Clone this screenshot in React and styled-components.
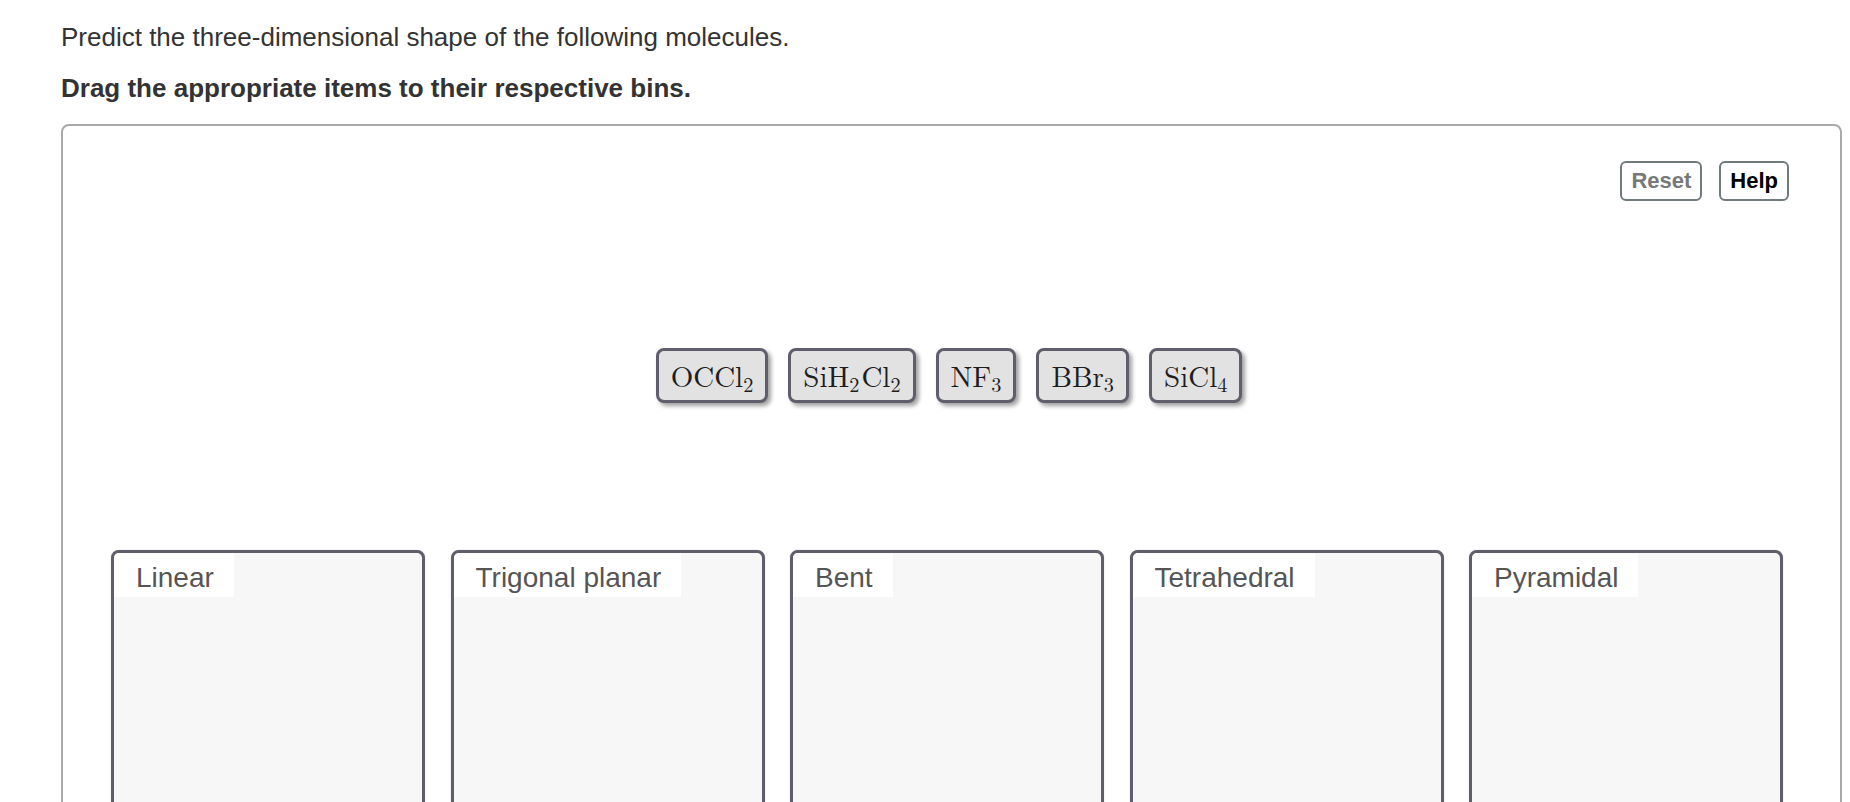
import React from "react";
import styled, { createGlobalStyle } from "styled-components";

const GlobalStyle = createGlobalStyle`
  html, body {
    margin: 0;
    padding: 0;
    background: #ffffff;
  }
  body {
    font-family: "Liberation Sans", Arial, Helvetica, sans-serif;
    color: #333333;
  }
`;

const Page = styled.div`
  padding: 22px 8px 0 61px;
`;

const Intro = styled.p`
  margin: 0 0 21px;
  font-size: 26px;
  line-height: 30px;
  color: #333333;
  font-weight: ${(p) => (p.$bold ? 700 : 400)};
`;

const Board = styled.div`
  border: 2px solid #a9a9a9;
  border-radius: 8px;
  height: 760px;
  box-sizing: border-box;
`;

const Toolbar = styled.div`
  display: flex;
  justify-content: flex-end;
  gap: 17px;
  padding: 35px 51px 0 0;
`;

const ToolButton = styled.button`
  height: 40px;
  padding: 0 9px;
  border: 2px solid #707b7d;
  border-radius: 6px;
  background: #ffffff;
  font-family: "Liberation Sans", Arial, sans-serif;
  font-weight: 700;
  font-size: 22px;
  color: ${(p) => (p.$muted ? "#787878" : "#000000")};
  cursor: pointer;
`;

const ItemRow = styled.div`
  display: flex;
  justify-content: center;
  gap: 20px;
  margin-top: 147px;
  padding-right: 5px;
`;

const Chip = styled.div`
  display: flex;
  align-items: center;
  height: 55px;
  box-sizing: border-box;
  padding: 0 12px 2px;
  border: 3px solid #5e5e6c;
  border-radius: 8px;
  background: #e2e2e2;
  box-shadow: 3px 3px 4px rgba(0, 0, 0, 0.38);
  font-family: "Latin Modern Roman", "Liberation Serif", "Times New Roman", serif;
  font-size: 29px;
  color: #1e1e1e;
  white-space: nowrap;
  cursor: grab;
`;

const Formula = styled.span`
  display: inline-block;
  line-height: 1;
`;

const Sub = styled.sub`
  font-size: 0.7em;
  line-height: 0;
  vertical-align: -0.25em;
  margin-right: ${(p) => (p.$gap ? "2px" : "0")};
`;

const BinRow = styled.div`
  display: flex;
  gap: 25.5px;
  margin-top: 147px;
  padding-left: 48px;
`;

const Bin = styled.div`
  width: 314px;
  height: 330px;
  flex-shrink: 0;
  box-sizing: border-box;
  border: 3px solid #5f5f6b;
  border-radius: 8px;
  background: #f7f7f7;
  box-shadow: 0 0 1px rgba(0, 0, 0, 0.4);
`;

const BinLabel = styled.div`
  display: inline-block;
  padding: 6px 20px 0 22px;
  line-height: 38px;
  background: #ffffff;
  font-size: 28px;
  color: #555555;
  border-top-left-radius: 5px;
`;

const molecules = [
  ["OCCl", ["2"]],
  ["SiH", ["2", true], "Cl", ["2"]],
  ["NF", ["3"]],
  ["BBr", ["3"]],
  ["SiCl", ["4"]],
];

const bins = ["Linear", "Trigonal planar", "Bent", "Tetrahedral", "Pyramidal"];

export default function App() {
  return (
    <>
      <GlobalStyle />
      <Page>
        <Intro>Predict the three-dimensional shape of the following molecules.</Intro>
        <Intro $bold>Drag the appropriate items to their respective bins.</Intro>
        <Board>
          <Toolbar>
            <ToolButton $muted>Reset</ToolButton>
            <ToolButton>Help</ToolButton>
          </Toolbar>
          <ItemRow>
            {molecules.map((m, i) => (
              <Chip key={i}>
                <Formula>
                  {m.map((part, j) =>
                    Array.isArray(part) ? (
                      <Sub key={j} $gap={part[1]}>
                        {part[0]}
                      </Sub>
                    ) : (
                      <span key={j}>{part}</span>
                    )
                  )}
                </Formula>
              </Chip>
            ))}
          </ItemRow>
          <BinRow>
            {bins.map((b) => (
              <Bin key={b}>
                <BinLabel>{b}</BinLabel>
              </Bin>
            ))}
          </BinRow>
        </Board>
      </Page>
    </>
  );
}
